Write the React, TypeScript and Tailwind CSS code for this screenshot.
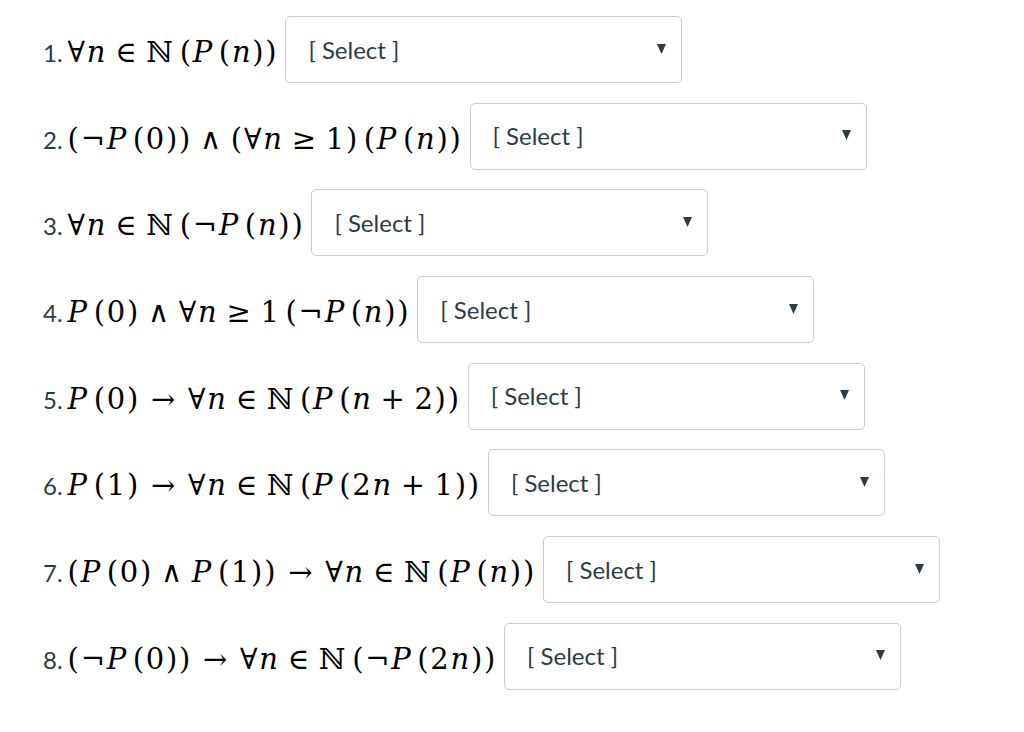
import React from "react";

// math pieces, spacing follows KaTeX (thin / medium / thick mu)
const V = ({ children }: { children: React.ReactNode }) => (
  <span className="italic">{children}</span>
);
const Thin = () => <span className="inline-block w-[0.1667em]" />;
const Med = () => <span className="inline-block w-[0.2222em]" />;
const Thick = () => <span className="inline-block w-[0.2778em]" />;

const Bin = ({ s }: { s: string }) => (
  <>
    <Med />
    <span className="mx-[0.05em]">{s}</span>
    <Med />
  </>
);
const Rel = ({ s }: { s: string }) => (
  <>
    <Thick />
    {s}
    <Thick />
  </>
);
// CM's arrow is a full em wide, DejaVu's is shorter
const To = () => (
  <>
    <Thick />
    <span className="mx-[0.1em]">→</span>
    <Thick />
  </>
);
const N = () => <span>ℕ</span>;

const rows: React.ReactNode[] = [
  <>
    ∀<V>n</V>
    <Rel s="∈" />
    <N />
    <Thin />(<V>P</V>
    <Thin />(<V>n</V>))
  </>,
  <>
    (¬<V>P</V>
    <Thin />
    (0))
    <Bin s="∧" />
    (∀<V>n</V>
    <Rel s="≥" />
    1)
    <Thin />(<V>P</V>
    <Thin />(<V>n</V>))
  </>,
  <>
    ∀<V>n</V>
    <Rel s="∈" />
    <N />
    <Thin />
    (¬<V>P</V>
    <Thin />(<V>n</V>))
  </>,
  <>
    <V>P</V>
    <Thin />
    (0)
    <Bin s="∧" />
    ∀<V>n</V>
    <Rel s="≥" />
    1<Thin />
    (¬<V>P</V>
    <Thin />(<V>n</V>))
  </>,
  <>
    <V>P</V>
    <Thin />
    (0)
    <To />
    ∀<V>n</V>
    <Rel s="∈" />
    <N />
    <Thin />(<V>P</V>
    <Thin />(<V>n</V>
    <Bin s="+" />
    2))
  </>,
  <>
    <V>P</V>
    <Thin />
    (1)
    <To />
    ∀<V>n</V>
    <Rel s="∈" />
    <N />
    <Thin />(<V>P</V>
    <Thin />
    (2<V>n</V>
    <Bin s="+" />
    1))
  </>,
  <>
    (<V>P</V>
    <Thin />
    (0)
    <Bin s="∧" />
    <V>P</V>
    <Thin />
    (1))
    <To />
    ∀<V>n</V>
    <Rel s="∈" />
    <N />
    <Thin />(<V>P</V>
    <Thin />(<V>n</V>))
  </>,
  <>
    (¬<V>P</V>
    <Thin />
    (0))
    <To />
    ∀<V>n</V>
    <Rel s="∈" />
    <N />
    <Thin />
    (¬<V>P</V>
    <Thin />
    (2<V>n</V>))
  </>,
];

function SelectBox() {
  return (
    <div className="ml-[7px] flex h-[67px] w-[397px] shrink-0 items-center justify-between rounded-[5px] border border-[#c7cdd1] bg-white pl-[22px] pr-[15px]">
      <span className="font-['Lato'] text-[24px] text-[#2d3b45]">[ Select ]</span>
      <svg width="9" height="10" viewBox="0 0 9 10" className="mt-[-2px]">
        <path d="M0 0 H9 L4.5 10 Z" fill="#2d3b45" />
      </svg>
    </div>
  );
}

export default function App() {
  return (
    <div className="min-h-screen bg-white pl-[43px] pt-[16px]">
      <div className="flex flex-col gap-[19.7px]">
        {rows.map((math, i) => (
          <div key={i} className="flex items-start">
            <div className="mt-[18px] whitespace-nowrap leading-[36px] text-[#2d3b45]">
              <span className="font-['Lato'] text-[24px]">{i + 1}.</span>
              <span className="ml-[5px] font-['DejaVu_Serif'] text-[29px] tracking-[0.06em] text-black">
                {math}
              </span>
            </div>
            <SelectBox />
          </div>
        ))}
      </div>
    </div>
  );
}
